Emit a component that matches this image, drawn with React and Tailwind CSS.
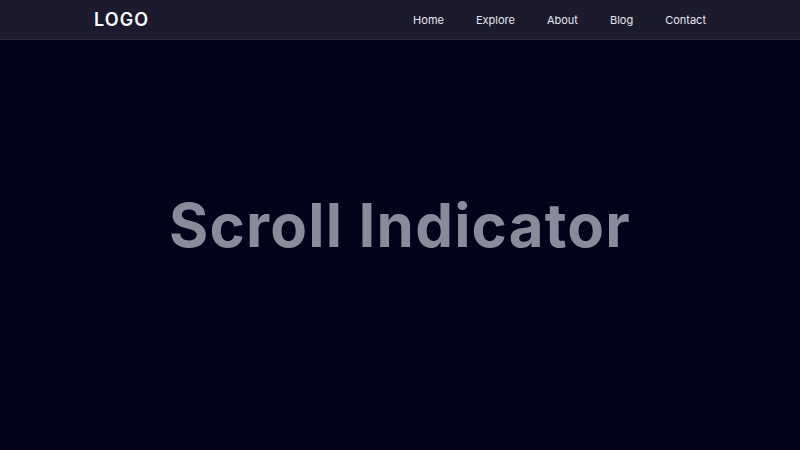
import React from 'react';

const links = ['Home', 'Explore', 'About', 'Blog', 'Contact'];

function Header() {
  return (
    <header className="fixed top-0 left-0 right-0 h-[40px] bg-[#1b1b2d] border-b border-[#2c2c40] z-10">
      <div className="h-full px-[94px] flex items-center justify-between">
        <span className="text-white font-semibold text-[18px] tracking-[0.06em]">LOGO</span>
        <nav className="flex items-center gap-[32px] pt-[2px] text-[11px] text-[#e6e6ee]">
          {links.map((l) => (
            <a key={l} href="#" className="hover:text-white">
              {l}
            </a>
          ))}
        </nav>
      </div>
    </header>
  );
}

export default function App() {
  return (
    <div className="min-h-[450px] bg-[#02021a]" style={{ fontFamily: 'Inter, "Noto Sans", sans-serif' }}>
      <Header />
      <main className="h-[450px] flex items-center justify-center">
        <h1 className="text-[60px] font-bold text-[#8a8b9a] tracking-[0.02em]">Scroll Indicator</h1>
      </main>
    </div>
  );
}
